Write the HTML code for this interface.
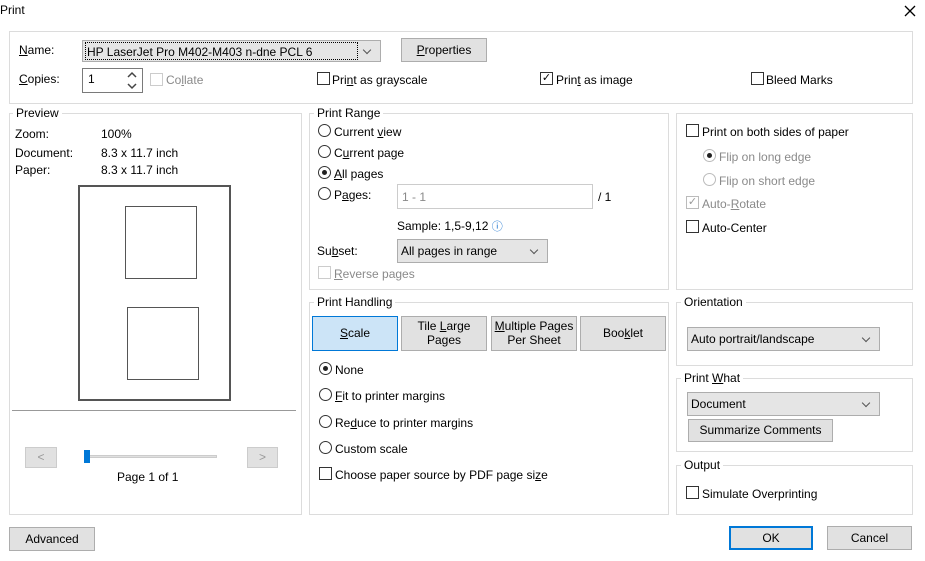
<!DOCTYPE html>
<html><head><meta charset="utf-8"><style>
*{box-sizing:border-box}
body{margin:0;width:925px;height:561px;background:#fff;font-family:"Liberation Sans",sans-serif;font-size:12px;color:#000;position:relative;overflow:hidden}
.a{position:absolute;white-space:nowrap}
.g{position:absolute;border:1px solid #dcdcdc}
.gl{position:absolute;background:#fff;padding:0 3px;white-space:nowrap}
.btn{position:absolute;background:#e1e1e1;border:1px solid #adadad;text-align:center;line-height:1.15}
.cb{position:absolute;width:13px;height:13px;border:1px solid #333;background:#fff}
.rb{position:absolute;width:13px;height:13px;border:1px solid #333;border-radius:50%;background:#fff}
.rb.on::after{content:"";position:absolute;left:3px;top:3px;width:5px;height:5px;border-radius:50%;background:#222}
.dis{color:#8a8a8a}
.combo{position:absolute;background:#e5e5e5;border:1px solid #adadad;padding-left:3px}
.arr{position:absolute;right:8px;top:0;width:10px;height:100%}
.arr::after{content:"";position:absolute;left:2px;top:50%;margin-top:-4px;width:5px;height:5px;border-right:1px solid #555;border-bottom:1px solid #555;transform:rotate(45deg)}
u{text-decoration:underline}
</style></head><body>
<div class="a" style="left:0;top:3px">Print</div>
<svg class="a" style="left:904px;top:5px" width="12" height="12" viewBox="0 0 12 12"><path d="M1 1L11 11M11 1L1 11" stroke="#000" stroke-width="1.3"/></svg>

<div class="g" style="left:9px;top:31px;width:904px;height:73px"></div>
<div class="a" style="left:19px;top:43px"><u>N</u>ame:</div>
<div class="combo" style="left:82px;top:40px;width:299px;height:22px;line-height:18px;padding:1px 2px"><span style="display:inline-block;width:273px;height:18px;border:1px dotted #000;padding-left:1px">HP LaserJet Pro M402-M403 n-dne PCL 6</span><span class="arr"></span></div>
<div class="btn" style="left:401px;top:38px;width:86px;height:24px;line-height:22px"><u>P</u>roperties</div>
<div class="a" style="left:19px;top:72px"><u>C</u>opies:</div>
<div class="a" style="left:82px;top:68px;width:61px;height:25px;border:1px solid #7a7a7a"></div>
<div class="a" style="left:88px;top:72px">1</div>
<svg class="a" style="left:126px;top:70px" width="12" height="21" viewBox="0 0 12 21"><path d="M2 7L6 3L10 7M2 14L6 18L10 14" fill="none" stroke="#444" stroke-width="1.5"/></svg>
<div class="cb" style="left:150px;top:73px;border-color:#ccc"></div>
<div class="a dis" style="left:166px;top:73px">Co<u>l</u>late</div>
<div class="cb" style="left:317px;top:72px"></div>
<div class="a" style="left:332px;top:73px">Pri<u>n</u>t as grayscale</div>
<div class="cb" style="left:540px;top:72px;font-size:11px;line-height:11px;text-align:center">✓</div>
<div class="a" style="left:556px;top:73px">Prin<u>t</u> as image</div>
<div class="cb" style="left:751px;top:72px"></div>
<div class="a" style="left:766px;top:73px">Bleed Marks</div>

<div class="g" style="left:9px;top:113px;width:293px;height:402px"></div>
<div class="gl" style="left:13px;top:106px">Preview</div>
<div class="a" style="left:15px;top:127px">Zoom:</div><div class="a" style="left:101px;top:127px">100%</div>
<div class="a" style="left:15px;top:146px">Document:</div><div class="a" style="left:101px;top:146px">8.3 x 11.7 inch</div>
<div class="a" style="left:15px;top:163px">Paper:</div><div class="a" style="left:101px;top:163px">8.3 x 11.7 inch</div>
<div class="a" style="left:78px;top:185px;width:153px;height:216px;border:2px solid #555"></div>
<div class="a" style="left:125px;top:206px;width:72px;height:73px;border:1px solid #555"></div>
<div class="a" style="left:127px;top:307px;width:72px;height:73px;border:1px solid #555"></div>
<div class="a" style="left:12px;top:410px;width:284px;height:1px;background:#999"></div>
<div class="btn" style="left:25px;top:447px;width:32px;height:21px;color:#999;border-color:#ccc;line-height:19px">&lt;</div>
<div class="btn" style="left:247px;top:447px;width:31px;height:21px;color:#999;border-color:#ccc;line-height:19px">&gt;</div>
<div class="a" style="left:86px;top:455px;width:131px;height:3px;background:#e0e0e0;border:1px solid #ccc"></div>
<div class="a" style="left:84px;top:450px;width:6px;height:13px;background:#0078d7"></div>
<div class="a" style="left:117px;top:470px">Page 1 of 1</div>

<div class="g" style="left:309px;top:113px;width:360px;height:177px"></div>
<div class="gl" style="left:314px;top:106px">Print Range</div>
<div class="rb" style="left:318px;top:124px"></div><div class="a" style="left:334px;top:125px">Current <u>v</u>iew</div>
<div class="rb" style="left:318px;top:145px"></div><div class="a" style="left:334px;top:146px">C<u>u</u>rrent page</div>
<div class="rb on" style="left:318px;top:166px"></div><div class="a" style="left:334px;top:167px"><u>A</u>ll pages</div>
<div class="rb" style="left:318px;top:187px"></div><div class="a" style="left:334px;top:188px">P<u>a</u>ges:</div>
<div class="a dis" style="left:397px;top:184px;width:196px;height:25px;border:1px solid #ccc;padding:5px 4px">1 - 1</div>
<div class="a" style="left:598px;top:190px">/ 1</div>
<div class="a" style="left:397px;top:218px">Sample: 1,5-9,12 <span style="color:#1a73d0;font-size:11px">ⓘ</span></div>
<div class="a" style="left:317px;top:244px">Su<u>b</u>set:</div>
<div class="combo" style="left:397px;top:239px;width:151px;height:24px;line-height:22px">All pages in range<span class="arr"></span></div>
<div class="cb" style="left:318px;top:266px;border-color:#ccc"></div>
<div class="a dis" style="left:334px;top:267px"><u>R</u>everse pages</div>

<div class="g" style="left:309px;top:302px;width:360px;height:213px"></div>
<div class="gl" style="left:314px;top:295px">Print Handling</div>
<div class="btn" style="left:312px;top:316px;width:86px;height:35px;line-height:33px;background:#cce4f7;border-color:#0078d7"><u>S</u>cale</div>
<div class="btn" style="left:401px;top:316px;width:86px;height:35px;padding-top:3px">Tile <u>L</u>arge<br>Pages</div>
<div class="btn" style="left:491px;top:316px;width:86px;height:35px;padding-top:3px"><u>M</u>ultiple Pages<br>Per Sheet</div>
<div class="btn" style="left:580px;top:316px;width:86px;height:35px;line-height:33px">Boo<u>k</u>let</div>
<div class="rb on" style="left:319px;top:362px"></div><div class="a" style="left:335px;top:363px">None</div>
<div class="rb" style="left:319px;top:388px"></div><div class="a" style="left:335px;top:389px"><u>F</u>it to printer margins</div>
<div class="rb" style="left:319px;top:415px"></div><div class="a" style="left:335px;top:416px">Re<u>d</u>uce to printer margins</div>
<div class="rb" style="left:319px;top:441px"></div><div class="a" style="left:335px;top:442px">Custom scale</div>
<div class="cb" style="left:319px;top:467px"></div><div class="a" style="left:335px;top:468px">Choose paper source by PDF page si<u>z</u>e</div>

<div class="g" style="left:676px;top:113px;width:237px;height:177px"></div>
<div class="cb" style="left:686px;top:124px"></div><div class="a" style="left:702px;top:125px">Print on both sides of paper</div>
<div class="rb on" style="left:703px;top:149px;border-color:#bbb"></div><div class="a dis" style="left:719px;top:150px">Flip on long edge</div>
<div class="rb" style="left:703px;top:173px;border-color:#bbb"></div><div class="a dis" style="left:719px;top:174px">Flip on short edge</div>
<div class="cb" style="left:686px;top:196px;border-color:#bbb;color:#999;font-size:11px;line-height:11px;text-align:center">✓</div><div class="a dis" style="left:702px;top:197px">Auto-<u>R</u>otate</div>
<div class="cb" style="left:686px;top:220px"></div><div class="a" style="left:702px;top:221px">Auto-Center</div>

<div class="g" style="left:676px;top:302px;width:237px;height:64px"></div>
<div class="gl" style="left:681px;top:295px">Orientation</div>
<div class="combo" style="left:687px;top:327px;width:193px;height:24px;line-height:22px">Auto portrait/landscape<span class="arr"></span></div>

<div class="g" style="left:676px;top:378px;width:237px;height:74px"></div>
<div class="gl" style="left:681px;top:371px">Print <u>W</u>hat</div>
<div class="combo" style="left:687px;top:392px;width:193px;height:24px;line-height:22px">Document<span class="arr"></span></div>
<div class="btn" style="left:688px;top:419px;width:145px;height:23px;line-height:21px">Summarize Comments</div>

<div class="g" style="left:676px;top:465px;width:237px;height:50px"></div>
<div class="gl" style="left:681px;top:458px">Output</div>
<div class="cb" style="left:686px;top:486px"></div><div class="a" style="left:702px;top:487px">Simulate Overprinting</div>

<div class="btn" style="left:9px;top:527px;width:86px;height:24px;line-height:22px">Advanced</div>
<div class="btn" style="left:729px;top:526px;width:84px;height:24px;line-height:20px;border:2px solid #0078d7">OK</div>
<div class="btn" style="left:827px;top:526px;width:85px;height:24px;line-height:22px">Cancel</div>
</body></html>
